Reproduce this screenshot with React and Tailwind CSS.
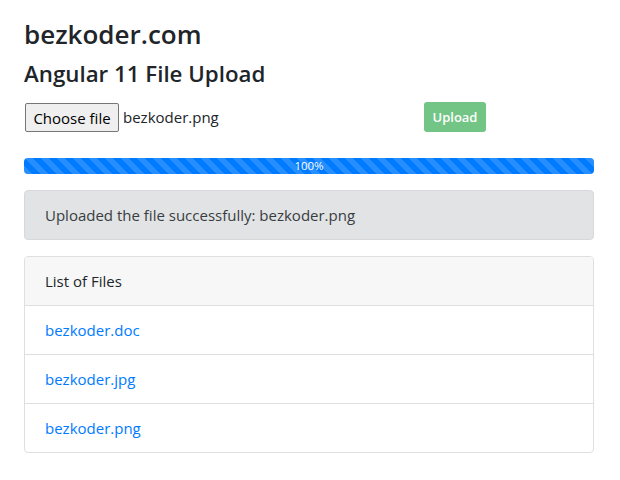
export default function App() {
  const files = ["bezkoder.doc", "bezkoder.jpg", "bezkoder.png"];
  return (
    <div className="min-h-screen bg-white font-['Segoe_UI','Open_Sans',sans-serif] text-[15px] leading-6 text-[#212529]">
      <div className="ml-6 w-[570px] pt-[18px]">
        <h3 className="mb-2 text-[26px] font-semibold leading-[33.6px]">bezkoder.com</h3>
        <h4 className="mb-2 text-[22.3px] font-semibold leading-[28.8px]">Angular 11 File Upload</h4>

        <div className="grid grid-cols-[400px_1fr]">
          <label className="mb-2 flex items-center pt-[6px] pb-[2px]">
            <span className="ml-px mt-px flex h-[29px] w-[94px] items-center justify-center rounded-[2px] border border-[#767676] bg-[#efefef] text-black">
              Choose file
            </span>
            <span className="ml-[4px]">bezkoder.png</span>
          </label>
          <div className="pt-[6px]">
            <button
              disabled
              className="h-[30px] w-[62px] rounded-[3px] bg-[#28a745] text-[13px] font-semibold leading-[1.5] text-white opacity-65"
            >
              Upload
            </button>
          </div>
        </div>

        <div className="my-4 flex h-4 overflow-hidden rounded-[4px] bg-[#e9ecef]">
          <div className="flex w-full items-center justify-center bg-[#007bff] bg-[linear-gradient(45deg,rgba(255,255,255,.15)_25%,transparent_25%,transparent_50%,rgba(255,255,255,.15)_50%,rgba(255,255,255,.15)_75%,transparent_75%,transparent)] bg-[length:1rem_1rem] text-[11.5px] leading-4 text-white">
            100%
          </div>
        </div>

        <div className="mb-4 rounded-[4px] border border-[#d6d8db] bg-[#e2e3e5] px-5 py-3 text-[#383d41]">
          Uploaded the file successfully: bezkoder.png
        </div>

        <div className="overflow-hidden rounded-[4px] border border-[#dfdfdf]">
          <div className="border-b border-[#dfdfdf] bg-[#f7f7f7] px-5 py-3">List of Files</div>
          <ul>
            {files.map((f, i) => (
              <li
                key={f}
                className={`px-5 py-3 ${i < files.length - 1 ? "border-b border-[#dfdfdf]" : ""}`}
              >
                <a href="#" className="text-[#007bff]">{f}</a>
              </li>
            ))}
          </ul>
        </div>
      </div>
    </div>
  );
}
